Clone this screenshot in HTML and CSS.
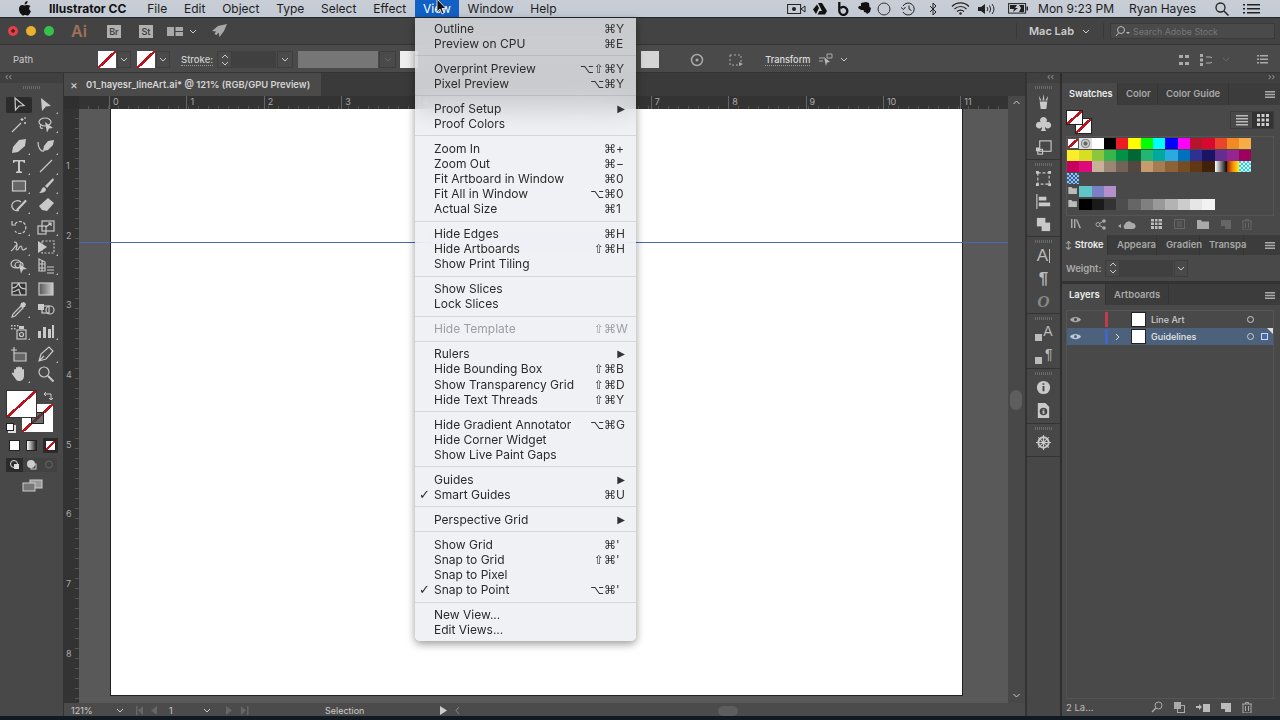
FILE: index.html
```html
<!DOCTYPE html>
<html lang="en">

<head>
  <meta charset="UTF-8">
  <title>Illustrator CC</title>
  <link rel="stylesheet" href="styles.css">
</head>

<body>
  <div class="app">
    <!-- mac menu bar -->
    <header class="menubar">
      <svg class="apple" width="14" height="15" viewBox="0 0 14 15"><path d="M9.6 0c.1 1-.3 1.800-.8 2.400-.6.7-1.400 1.100-2.200 1 -.1-.9.3-1.700.8-2.300C8 .5 8.900.1 9.600 0zM12.600 5c-.9.6-1.400 1.400-1.400 2.400 0 1.200.7 2.100 1.800 2.600-.4 1.200-1 2.300-1.700 3.200-.6.700-1.100 1.300-2 1.300-.8 0-1.100-.5-2.100-.5s-1.300.5-2.100.5c-.9 0-1.500-.7-2.100-1.500C1.700 11.500 1 9.600 1 7.900 1 5.400 2.600 4 4.200 4c.9 0 1.600.6 2.200.6.600 0 1.400-.7 2.500-.7 1.300 0 2.400.4 3.700 1.100z"/></svg>
      <span class="app-name">Illustrator CC</span>
      <span class="mi">File</span><span class="mi">Edit</span><span class="mi">Object</span><span class="mi">Type</span><span class="mi">Select</span><span class="mi">Effect</span><span class="mi mi-on">View</span><span class="mi">Window</span><span class="mi">Help</span>
      <div class="status-icons">
        <svg width="19" height="12" viewBox="0 0 19 12"><rect x=".6" y="1.500" width="13" height="9" fill="none" stroke="#222"/><circle cx="7" cy="6" r="2"/><path d="M14 6l4-3v6z" fill="none" stroke="#222"/></svg>
        <svg class="g7" width="14" height="12" viewBox="0 0 14 12"><path d="M5 0h4l5 8H9zM4 1.500l2 3.500-3 6-3-4.500zM4.500 11.500l2-3.500h7.500l-2 3.500z"/></svg>
        <svg class="g11" width="11" height="14" viewBox="0 0 11 14"><path d="M1.300 0v9a4 4 0 1 0 1-2.700" fill="none" stroke="#111" stroke-width="2.300"/></svg>
        <svg class="g12" width="13" height="13" viewBox="0 0 13 13"><path d="M3 1l5-1 3 1 .5 4 1.500 1-1 4-3 2-1-1.500-2-.5-.5-2H3L0 6l1-2h2z"/></svg>
        <svg class="g-circle" width="14" height="14" viewBox="0 0 14 14"><circle cx="7" cy="7" r="6" fill="none" stroke="#333"/></svg>
        <svg class="g10" width="16" height="14" viewBox="0 0 16 14"><path d="M3 4a6 6 0 1 1 0 6M1 5.500l2.500 2 2-2.500M9 3.500V7l2.500 1.500" fill="none" stroke="#222"/></svg>
        <svg class="g14" width="9" height="14" viewBox="0 0 9 14"><path d="M1 4l6 6-3 3V1l3 3-6 6" fill="none" stroke="#222"/></svg>
        <svg class="g13" width="19" height="13" viewBox="0 0 19 13"><path d="M1 4.500a12 12 0 0 1 17 0M3.500 7a8.500 8.500 0 0 1 12 0M6 9.500a5 5 0 0 1 7 0" fill="none" stroke="#222" stroke-width="1.200"/><circle cx="9.500" cy="11.500" r="1.200"/></svg>
        <svg class="g8" width="19" height="12" viewBox="0 0 19 12"><path d="M0 4h3l4-3v10L3 8H0z"/><path d="M9 4a3 3 0 0 1 0 4M11.500 2.500a6 6 0 0 1 0 7M14 1a8 8 0 0 1 0 10" fill="none" stroke="#222"/></svg>
        <svg class="g11" width="20" height="11" viewBox="0 0 20 11"><rect x=".6" y=".6" width="17" height="9.500" fill="none" stroke="#222"/><path d="M2 2h7l-2 3h3l-5 4 1-3H2zM11 2h5v7h-5l2-4z"/><rect x="18.500" y="3.500" width="1.500" height="4"/></svg>
      </div>
      <span class="clock">Mon 9:23 PM</span>
      <span class="user">Ryan Hayes</span>
      <svg class="g-search" width="14" height="14" viewBox="0 0 14 14"><circle cx="5.500" cy="5.500" r="4.500" fill="none" stroke="#222" stroke-width="1.300"/><path d="M9 9l4.500 4.500" stroke="#222" stroke-width="1.500"/></svg>
      <svg class="g-list" width="17" height="11" viewBox="0 0 17 11"><path d="M0 1h2v1.500H0zM4 1h13v1.500H4zM0 5h2v1.500H0zM4 5h13v1.500H4zM0 9h2v1.500H0zM4 9h13v1.500H4z"/></svg>
    </header>

    <!-- ai title bar -->
    <div class="titlebar">
      <div class="lights">
        <span class="light red"></span><span class="light yellow"></span><span class="light green"></span>
      </div>
      <span class="ai-logo">Ai</span>
      <span class="bridge">Br</span>
      <span class="bridge st">St</span>
      <svg class="layout-ic" width="16" height="11" viewBox="0 0 16 11"><path d="M0 1h7v9H0zM8.500 1H16v4H8.500zM8.500 6H16v4H8.500z" fill="#a9a9a9"/></svg>
      <svg class="chev" width="8" height="5" viewBox="0 0 8 5"><path d="M1 1l3 3 3-3"/></svg>
      <svg class="rocket" width="15" height="14" viewBox="0 0 15 14"><path d="M15 0L6 2 0 7l4 .5L2.500 10l2 1 2-2.500L7.500 13 12 7z" fill="#a9a9a9"/></svg>
      <div class="title-right">
        <span class="v-sep"></span>
        <span class="workspace">Mac Lab</span>
        <svg class="chev chev-wide" width="8" height="5" viewBox="0 0 8 5"><path d="M1 1l3 3 3-3"/></svg>
        <span class="v-sep"></span>
        <div class="stock-search">
          <svg width="15" height="12" viewBox="0 0 15 12"><circle cx="6" cy="5" r="3.500" fill="none" stroke="#bbb"/><path d="M3.500 8L1 11" stroke="#bbb"/><path d="M11 7h4l-2 2z" fill="#bbb"/></svg>
          <span>Search Adobe Stock</span>
        </div>
      </div>
    </div>

    <!-- control bar -->
    <div class="controlbar">
      <span class="ctl-path">Path</span>
      <span class="none ctl-swatch"></span><span class="ctl-drop"><svg class="chev" width="8" height="5" viewBox="0 0 8 5"><path d="M1 1l3 3 3-3"/></svg></span>
      <span class="none ctl-swatch sw2"></span><span class="ctl-drop"><svg class="chev" width="8" height="5" viewBox="0 0 8 5"><path d="M1 1l3 3 3-3"/></svg></span>
      <span class="ctl-stroke">Stroke:</span>
      <span class="spin"><svg width="8" height="14" viewBox="0 0 8 14"><path d="M1 5l3-3 3 3M1 9l3 3 3-3" fill="none" stroke="#ccc"/></svg></span>
      <span class="ctl-field"></span>
      <span class="ctl-drop wide"><svg class="chev" width="8" height="5" viewBox="0 0 8 5"><path d="M1 1l3 3 3-3"/></svg></span>
      <span class="ctl-grey"></span>
      <span class="ctl-drop off"><svg class="chev" width="8" height="5" viewBox="0 0 8 5"><path d="M1 1l3 3 3-3"/></svg></span>
      <span class="ctl-white"></span>
      <span class="ctl-white box2"></span>
      <svg class="ctl-ic globe" width="14" height="14" viewBox="0 0 14 14"><circle cx="7" cy="7" r="5.500" fill="none" stroke="#aaa" stroke-width="1.500"/><circle cx="7" cy="7" r="1.500" fill="#aaa"/></svg>
      <svg class="ctl-ic dash" width="16" height="14" viewBox="0 0 16 14"><rect x="2" y="2" width="11" height="10" fill="none" stroke="#aaa" stroke-dasharray="2 2"/><path d="M11 9l4 2-4 2z" fill="#aaa"/></svg>
      <span class="ctl-transform">Transform</span>
      <svg class="ctl-ic trans" width="15" height="14" viewBox="0 0 15 14"><path d="M1 5h5M1 8h4M9 1h5v4H9z" fill="none" stroke="#aaa"/><path d="M6 4l6 5-3 .5-1 3.500z" fill="#bbb"/></svg>
      <svg class="chev trans-chev" width="8" height="5" viewBox="0 0 8 5"><path d="M1 1l3 3 3-3"/></svg>
      <div class="ctl-right">
        <svg width="12" height="12" viewBox="0 0 12 12"><path d="M1 1h4v3H1zM7 1h4v3H7zM1 8h4v3H1zM7 8h4v3H7z" fill="#aaa"/></svg>
        <svg width="12" height="12" viewBox="0 0 12 12"><path d="M0 0h3v3H0zM0 4.500h3v3H0zM0 9h3v3H0z" fill="#aaa"/><path d="M6 3h4a3 3 0 0 1 0 6H6" fill="none" stroke="#aaa"/></svg>
        <svg class="chev off" width="8" height="5" viewBox="0 0 8 5"><path d="M1 1l3 3 3-3"/></svg>
        <svg class="ctl-list" width="11" height="9" viewBox="0 0 11 9"><path d="M0 0h2v1.500H0zM3 0h8v1.500H3zM0 3.500h2V5H0zM3 3.500h8V5H3zM0 7h2v1.500H0zM3 7h8v1.500H3z" fill="#aaa"/></svg>
      </div>
    </div>

    <div class="workspace-row">
      <!-- tools -->
      <aside class="toolbar">
        <div class="collapse-row">&lsaquo;&lsaquo;</div>
        <div class="grip"></div>
        <div class="tools">
          <span class="tool plain tool-on"><svg viewBox="0 0 18 18"><path d="M5 2l9 7.500-5 .5-3.500 4z"/></svg></span>
          <span class="tool"><svg viewBox="0 0 18 18"><path class="f" d="M4 2l10 8-5 .5-4 4.500z"/></svg></span>
          <span class="tool plain"><svg viewBox="0 0 18 18"><path d="M2 16L11 7M12 2v3M10.500 3.500h3M15 6v2M14 7h2M15 1v2"/></svg></span>
          <span class="tool"><svg viewBox="0 0 18 18"><ellipse cx="8" cy="6" rx="6" ry="4"/><path d="M4 9c-2 2 0 4 2 3"/><path class="f" d="M8 6l8 6-4 .5-2 4z"/></svg></span>

          <span class="tool gap2"><svg viewBox="0 0 18 18"><path class="f" d="M16 2l-7 1-6 7-1 6 6-1 7-6z"/></svg></span>
          <span class="tool gap2"><svg viewBox="0 0 18 18"><path class="f" d="M17 3l-6 1-4 5-1 5 5-1 5-5z"/><path d="M1 5c0 6 3 10 6 9"/></svg></span>
          <span class="tool"><svg viewBox="0 0 18 18"><path class="f" d="M3 3h12v3h-1l-1-1.500h-3V14l2 .7V16H6v-1.300l2-.7V4.500H5L4 6H3z"/></svg></span>
          <span class="tool"><svg viewBox="0 0 18 18"><path d="M3 15L15 3"/></svg></span>
          <span class="tool"><svg viewBox="0 0 18 18"><rect x="2.500" y="4" width="13" height="10" fill="#666"/></svg></span>
          <span class="tool"><svg viewBox="0 0 18 18"><path class="f" d="M16 1L8 9l2 2 7-8zM7 10c-3 1-2 4-5 6 4 0 7-1 7-4z"/></svg></span>
          <span class="tool"><svg viewBox="0 0 18 18"><path d="M11 6a5.500 5 0 1 0-2 8.500M6 15L16 4.500"/><path d="M16 4.500L7 14" stroke-width="2"/></svg></span>
          <span class="tool"><svg viewBox="0 0 18 18"><path class="f" d="M11 2l6 5-7 8-5-1-3-4z"/></svg></span>

          <span class="tool gap2"><svg viewBox="0 0 18 18"><path d="M5 6a6 6 0 1 1 0 7" stroke-dasharray="3 1.500"/><path d="M2 3v4h4"/></svg></span>
          <span class="tool gap2"><svg viewBox="0 0 18 18"><rect x="1" y="8" width="8" height="8"/><rect x="5" y="3" width="12" height="10"/><path d="M9 9l5-4M11 5h3v3"/></svg></span>
          <span class="tool"><svg viewBox="0 0 18 18"><path d="M1 13c3-1 3-5 6-6 0 3-2 5 0 5s2-4 4-4 0 4 2 4 3-2 4-2M4 4c1 0 3 0 3 3"/></svg></span>
          <span class="tool"><svg viewBox="0 0 18 18"><rect x="5" y="3" width="12" height="12" stroke-dasharray="2 1.500"/><path class="f" d="M1 3l9 6-9 6z"/></svg></span>
          <span class="tool"><svg viewBox="0 0 18 18"><ellipse cx="6" cy="7" rx="5" ry="4"/><ellipse cx="9" cy="8" rx="4" ry="3"/><path class="f" d="M9 7l8 5-4 .5-2 4z"/></svg></span>
          <span class="tool"><svg viewBox="0 0 18 18"><path d="M2 2l6 3v9H2zM2 7h6M2 11h6M5 3v11M10 10h7M10 13h7M10 16h7"/></svg></span>

          <span class="tool plain gap3"><svg viewBox="0 0 18 18"><rect x="2" y="3" width="14" height="12" fill="#333"/><path d="M2 8c4 0 5-2 7-5M9 3c0 4 2 6 7 6M2 12c3 0 5-2 7-3M9 9c0 3 1 4 2 6"/></svg></span>
          <span class="tool plain gap3"><svg viewBox="0 0 18 18"><defs><linearGradient id="toolGrad"><stop offset="0" stop-color="#555"/><stop offset="1" stop-color="#ccc"/></linearGradient></defs><rect x="2" y="3" width="14" height="12" fill="url(#toolGrad)"/></svg></span>

          <span class="tool"><svg viewBox="0 0 18 18"><path d="M11 6L3 14l-1 3 3-1 8-8z"/><path class="f" d="M10 5l3 3 1-1 1 0 1-3-2-2-3 1v1z"/></svg></span>
          <span class="tool plain"><svg viewBox="0 0 18 18"><rect class="f" x="1" y="4" width="6" height="6"/><rect x="5" y="6" width="7" height="7"/><circle cx="13" cy="10" r="4"/></svg></span>

          <span class="tool gap3"><svg viewBox="0 0 18 18"><path class="f" d="M1 3h1.500v1.500H1zM4 3h1.500v1.500H4zM7 3h1.500v1.500H7zM1 6h1.500v1.500H1zM4 6h1.500v1.500H4z"/><rect x="7" y="8" width="9" height="9"/><rect class="f" x="9" y="4" width="5" height="3"/><circle cx="11.500" cy="12.500" r="2"/></svg></span>
          <span class="tool gap3"><svg viewBox="0 0 18 18"><path class="f" d="M1 9h3v7H1zM6 5h3v11H6zM11 7h3v9h-3zM15 3h2v13h-2z"/></svg></span>

          <span class="tool plain gap3"><svg viewBox="0 0 18 18"><path d="M1 5h6M4 2v6"/><path d="M4 8h12v8H4z" fill="#666"/></svg></span>
          <span class="tool gap3"><svg viewBox="0 0 18 18"><path d="M2 16l2-7 8-7 4 4-7 8zM2 16l5-5"/></svg></span>
          <span class="tool"><svg viewBox="0 0 18 18"><path class="f" d="M4 10V5a1 1 0 0 1 2 0V3a1 1 0 0 1 2 0v-.5a1 1 0 0 1 2 0V3a1 1 0 0 1 2 0v2a1 1 0 0 1 2 0v6c0 3-2 5-5 5-2 0-3-1-4-3L2 9c-.5-1.500 1-2 2-1z"/></svg></span>
          <span class="tool plain"><svg viewBox="0 0 18 18"><circle cx="7" cy="7" r="5"/><path d="M11 11l5.500 5.500" stroke-width="2"/></svg></span>
        </div>

        <div class="color-wells">
          <span class="none well-stroke"><span class="well-hole"></span></span>
          <span class="none well-fill"></span>
          <svg class="well-swap" width="10" height="10" viewBox="0 0 10 10"><path d="M1 3h6v6M0 3l2-2M0 3l2 2M5 7l2 2 2-2" fill="none" stroke="#ccc"/></svg>
          <span class="well-default"></span>
        </div>
        <div class="modes">
          <span class="mode white"></span>
          <span class="mode gradient"></span>
          <span class="mode-on"><span class="none mode"></span></span>
        </div>
        <div class="draw-modes">
          <span class="dm dm-on"><svg width="12" height="11" viewBox="0 0 12 11"><circle cx="5" cy="5" r="3.500" fill="none" stroke="#ddd"/><rect x="5" y="5" width="5" height="5" fill="#ddd"/></svg></span>
          <span class="dm"><svg width="12" height="11" viewBox="0 0 12 11"><circle cx="5" cy="5" r="4" fill="#ccc"/><rect x="5" y="5" width="5" height="5" fill="none" stroke="#ccc"/></svg></span>
          <span class="dm"><svg width="12" height="11" viewBox="0 0 12 11"><circle cx="6" cy="5.500" r="3.500" fill="none" stroke="#666"/></svg></span>
        </div>
        <svg class="screen-mode" width="21" height="13" viewBox="0 0 21 13"><rect x="8" y="1" width="12" height="8" fill="#999" stroke="#ccc"/><rect x="1" y="4" width="12" height="8" fill="#777" stroke="#ccc"/></svg>
      </aside>

      <!-- document -->
      <main class="doc">
        <div class="tabstrip">
          <div class="doc-tab"><span class="doc-x">&times;</span><span>01_hayesr_lineArt.ai* @ 121% (RGB/GPU Preview)</span></div>
        </div>
        <div class="ruler-h">
          <span class="ruler-corner"></span>
          <div class="ruler-marks">
            <span>0</span><span>1</span><span>2</span><span>3</span><span>4</span><span>5</span><span>6</span><span>7</span><span>8</span><span>9</span><span>10</span><span>11</span>
          </div>
          <span class="scroll-cap"><svg class="chev up" width="9" height="5" viewBox="0 0 8 5"><path d="M1 4l3-3 3 3"/></svg></span>
        </div>
        <div class="doc-body">
          <div class="ruler-v">
            <span>1</span><span>2</span><span>3</span><span>4</span><span>5</span><span>6</span><span>7</span><span>8</span>
          </div>
          <div class="canvas">
            <div class="artboard"></div>
            <div class="guide"></div>
          </div>
          <div class="vscroll">
            <span class="vthumb"></span>
            <svg class="chev" width="9" height="5" viewBox="0 0 8 5"><path d="M1 1l3 3 3-3"/></svg>
          </div>
        </div>
        <div class="statusbar">
          <span class="st-zoom">121%</span>
          <svg class="chev st-drop" width="8" height="5" viewBox="0 0 8 5"><path d="M1 1l3 3 3-3"/></svg>
          <svg class="st-nav" width="24" height="9" viewBox="0 0 24 9"><path d="M0 0h1.500v9H0zM7 0v9L2 4.500zM21 0v9l-6-4.500z" fill="#666"/></svg>
          <span class="st-page">1</span>
          <svg class="chev st-drop2" width="8" height="5" viewBox="0 0 8 5"><path d="M1 1l3 3 3-3"/></svg>
          <svg class="st-nav st-nav2" width="24" height="9" viewBox="0 0 24 9"><path d="M0 0v9l6-4.500zM15 0v9l5-4.500zM21 0h1.500v9H21z" fill="#666"/></svg>
          <span class="st-tool">Selection</span>
          <svg class="st-play" width="7" height="9" viewBox="0 0 7 9"><path d="M0 0l7 4.500L0 9z" fill="#ccc"/></svg>
          <svg class="st-left" width="5" height="9" viewBox="0 0 5 9"><path d="M4 1L1 4.500 4 8" fill="none" stroke="#888"/></svg>
          <span class="hthumb"></span>
        </div>
      </main>

      <!-- dock column -->
      <aside class="dock">
        <div class="collapse-row right">&lsaquo;&lsaquo;</div>
        <div class="dock-group">
          <div class="grip"></div>
          <svg viewBox="0 0 18 18"><path class="f" d="M5 9h8l-1 8H6zM4 3l3 5H5zM14 3l-3 5h2zM9 1l1 7H8z"/></svg>
          <svg viewBox="0 0 18 18"><path class="f" d="M9 1a3.500 3.500 0 0 1 3 5.500 3.500 3.500 0 1 1-1.500 5c0 2 .5 3.500 1.500 4.500H6c1-1 1.500-2.500 1.500-4.500a3.500 3.500 0 1 1-1.500-5A3.500 3.500 0 0 1 9 1z"/></svg>
          <svg viewBox="0 0 18 18"><rect x="5" y="2" width="12" height="11"/><rect class="f" x="1" y="9" width="4" height="4"/><rect x="3" y="11" width="5" height="5"/></svg>
        </div>
        <div class="dock-group">
          <div class="grip"></div>
          <svg viewBox="0 0 18 18"><rect x="3" y="3" width="12" height="12" stroke-dasharray="3 2"/><path class="f" d="M1 1h3v3H1zM14 1h3v3h-3zM1 14h3v3H1zM14 14h3v3h-3z"/></svg>
          <svg viewBox="0 0 18 18"><path d="M2 1v16"/><path class="f" d="M4 4h8v4H4zM4 10h12v4H4z"/></svg>
          <svg viewBox="0 0 18 18"><rect class="f" x="2" y="2" width="9" height="9"/><rect class="f" x="7" y="7" width="9" height="9"/></svg>
        </div>
        <div class="dock-group">
          <div class="grip"></div>
          <span class="dock-text">A<i></i></span>
          <span class="dock-text para">&para;</span>
          <span class="dock-text opentype">O</span>
        </div>
        <div class="dock-group">
          <div class="grip"></div>
          <span class="dock-style"><b>A</b></span>
          <span class="dock-style"><b>&para;</b></span>
        </div>
        <div class="dock-group">
          <div class="grip"></div>
          <svg viewBox="0 0 18 18"><circle class="f" cx="9" cy="9" r="7"/><path d="M9 7.500V13M9 4.500v1.500" class="dk"/></svg>
          <svg viewBox="0 0 18 18"><path class="f" d="M3 1h8l4 4v12H3z"/><circle cx="9" cy="10" r="4" class="dk2"/><path d="M9 9v3.500M9 7.500v.5" class="lt"/></svg>
        </div>
        <div class="dock-group last">
          <div class="grip"></div>
          <svg viewBox="0 0 18 18"><circle cx="9" cy="9" r="5.500" stroke-width="2"/><circle class="f" cx="9" cy="9" r="1.800"/><path d="M9 1v16M1 9h16M3.500 3.500l11 11M14.500 3.500l-11 11"/></svg>
        </div>
      </aside>

      <!-- panels -->
      <section class="panels">
        <div class="collapse-row right end">&rsaquo;&rsaquo;</div>

        <div class="tabs">
          <span class="tab tab-on t-swatches">Swatches</span><span class="tab t-color">Color</span><span class="tab">Color Guide</span>
          <svg class="burger" width="10" height="7" viewBox="0 0 10 7"><path d="M0 0h10v1.500H0zM0 2.800h10v1.500H0zM0 5.500h10V7H0z"/></svg>
        </div>
        <div class="swatches-panel">
          <div class="sw-head">
            <div class="sw-wells">
              <span class="none sw-well back"></span>
              <span class="none sw-well"></span>
            </div>
            <div class="view-toggle">
              <span class="view"><svg width="12" height="12" viewBox="0 0 12 12"><path d="M0 1h12v1.500H0zM0 4h12v1.500H0zM0 7h12v1.500H0zM0 10h12v1.500H0z" fill="#bbb"/></svg></span>
              <span class="view view-on"><svg width="12" height="12" viewBox="0 0 12 12"><path d="M0 0h3v3H0zM4.500 0h3v3h-3zM9 0h3v3H9zM0 4.500h3v3H0zM4.500 4.500h3v3h-3zM9 4.500h3v3H9zM0 9h3v3H0zM4.500 9h3v3h-3zM9 9h3v3H9z" fill="#ccc"/></svg></span>
            </div>
          </div>
          <div class="well-frame">
            <div class="sw-row">
              <i class="none sw-none"></i><i class="sw-reg"></i><i style="background:#fff"></i><i style="background:#000"></i><i style="background:#ed1c24"></i><i style="background:#ff0"></i><i style="background:#0f0"></i><i style="background:#0ff"></i><i style="background:#00f"></i><i style="background:#f0f"></i><i style="background:#b5152b"></i><i style="background:#d8082f"></i><i style="background:#e8452a"></i><i style="background:#f18a23"></i><i style="background:#f6ad47"></i>
            </div>
            <div class="sw-row">
              <i style="background:#fbed2a"></i><i style="background:#d7df23"></i><i style="background:#8cc63f"></i><i style="background:#39b54a"></i><i style="background:#009245"></i><i style="background:#006837"></i><i style="background:#22b573"></i><i style="background:#00a99d"></i><i style="background:#29abe2"></i><i style="background:#0071bc"></i><i style="background:#2e3192"></i><i style="background:#1b1464"></i><i style="background:#662d91"></i><i style="background:#93278f"></i><i style="background:#9e005d"></i>
            </div>
            <div class="sw-row">
              <i style="background:#c6005d"></i><i style="background:#dd0a7c"></i><i style="background:#c7b299"></i><i style="background:#998675"></i><i style="background:#736357"></i><i style="background:#534741"></i><i style="background:#c69c6d"></i><i style="background:#a67c52"></i><i style="background:#8c6239"></i><i style="background:#754c24"></i><i style="background:#603813"></i><i style="background:#42210b"></i><i class="sw-bw"></i><i class="sw-orange"></i><i class="sw-check"></i>
            </div>
            <div class="sw-row">
              <i class="sw-pattern"></i>
            </div>
            <div class="sw-row sw-group">
              <svg class="folder" width="11" height="9" viewBox="0 0 11 9"><path d="M0 0h4l1 1.500h6V9H0z" fill="#bbb"/></svg><i style="background:#5fc6c8"></i><i style="background:#7a7fc6"></i><i style="background:#b58fcb"></i>
            </div>
            <div class="sw-row sw-group">
              <svg class="folder" width="11" height="9" viewBox="0 0 11 9"><path d="M0 0h4l1 1.500h6V9H0z" fill="#bbb"/></svg><i style="background:#000"></i><i style="background:#1a1a1a"></i><i style="background:#333"></i><i style="background:#4d4d4d"></i><i style="background:#666"></i><i style="background:#808080"></i><i style="background:#999"></i><i style="background:#b3b3b3"></i><i style="background:#ccc"></i><i style="background:#e6e6e6"></i><i style="background:#f2f2f2"></i>
            </div>
          </div>
          <div class="sw-foot">
            <svg width="14" height="11" viewBox="0 0 14 11"><path d="M1 0h1.500v9H1zM4 0h1.500v9H4zM7 0l4 9-1.500.5L6 1z" fill="#aaa"/></svg>
            <svg width="12" height="11" viewBox="0 0 12 11"><circle cx="3" cy="5.500" r="2" fill="none" stroke="#aaa"/><circle cx="9" cy="2" r="1.800" fill="#aaa"/><circle cx="9" cy="9" r="1.800" fill="#aaa"/><path d="M4.500 4.500L8 2.500M4.500 6.500L8 8.500" stroke="#aaa"/></svg>
            <svg width="18" height="11" viewBox="0 0 18 11"><path d="M7 10a3 3 0 0 1 0-5 4 4 0 0 1 7-1 3 3 0 0 1 1 6zM0 7l3-2v4z" fill="#aaa"/></svg>
            <svg class="foot-grid" width="12" height="11" viewBox="0 0 12 11"><rect width="11" height="10" fill="#bbb"/><path d="M0 3h11M0 6.500h11M3.500 0v10M7 0v10" stroke="#444"/></svg>
            <svg class="foot-dim" width="12" height="10" viewBox="0 0 12 10"><rect x=".5" y=".5" width="10" height="9" fill="none" stroke="#666"/><path d="M3 3h5M3 5h5M3 7h5" stroke="#666"/></svg>
            <svg width="13" height="9" viewBox="0 0 13 9"><path d="M0 0h4l1 1.500h7V9H0z" fill="#aaa"/></svg>
            <svg class="foot-dim" width="10" height="9" viewBox="0 0 10 9"><path d="M0 0h10v9H4V6H0z" fill="#666"/></svg>
            <svg class="foot-dim" width="10" height="11" viewBox="0 0 10 11"><path d="M0 2h10M3.500 2V.5h3V2M1 2v9h8V2M3.500 4v5M6.500 4v5" fill="none" stroke="#666"/></svg>
          </div>
        </div>

        <div class="tabs tabs-small">
          <span class="tab tab-on stroke-tab"><em>&#8597;</em>Stroke</span><span class="tab t-app">Appeara</span><span class="tab t-grad">Gradien</span><span class="tab t-trans">Transpa</span>
          <svg class="burger" width="10" height="7" viewBox="0 0 10 7"><path d="M0 0h10v1.500H0zM0 2.800h10v1.500H0zM0 5.500h10V7H0z"/></svg>
        </div>
        <div class="stroke-panel">
          <span class="weight">Weight:</span>
          <span class="spin"><svg width="8" height="14" viewBox="0 0 8 14"><path d="M1 5l3-3 3 3M1 9l3 3 3-3" fill="none" stroke="#ccc"/></svg></span>
          <span class="ctl-field stroke-field"></span>
          <span class="ctl-drop"><svg class="chev" width="8" height="5" viewBox="0 0 8 5"><path d="M1 1l3 3 3-3"/></svg></span>
        </div>

        <div class="tabs layer-tabs">
          <span class="tab tab-on t-layers">Layers</span><span class="tab">Artboards</span>
          <svg class="burger" width="10" height="7" viewBox="0 0 10 7"><path d="M0 0h10v1.500H0zM0 2.800h10v1.500H0zM0 5.500h10V7H0z"/></svg>
        </div>
        <div class="layers-panel">
          <div class="layer-list">
            <div class="layer">
              <svg class="eye" width="11" height="7" viewBox="0 0 11 7"><path d="M0 3.500C2 0 9 0 11 3.500 9 7 2 7 0 3.500z" fill="#aaa"/><circle cx="5.500" cy="3.500" r="1.500" fill="#444"/></svg>
              <span class="layer-color redbar"></span>
              <span class="layer-arrow"></span>
              <span class="layer-thumb"></span>
              <span class="layer-name">Line Art</span>
              <span class="layer-dot"></span>
              <span class="layer-sel"></span>
            </div>
            <div class="layer layer-on">
              <svg class="eye" width="11" height="7" viewBox="0 0 11 7"><path d="M0 3.500C2 0 9 0 11 3.500 9 7 2 7 0 3.500z" fill="#bcc8d6"/><circle cx="5.500" cy="3.500" r="1.500" fill="#4c627c"/></svg>
              <span class="layer-color bluebar"></span>
              <span class="layer-arrow"><svg width="5" height="8" viewBox="0 0 5 8"><path d="M1 1l3 3-3 3" fill="none" stroke="#ddd"/></svg></span>
              <span class="layer-thumb"></span>
              <span class="layer-name">Guidelines</span>
              <span class="layer-dot"></span>
              <span class="layer-sel on"></span>
              <span class="layer-corner"></span>
            </div>
          </div>
        </div>
        <div class="layers-foot">
          <span class="layer-count">2 La...</span>
          <svg width="12" height="12" viewBox="0 0 12 12"><circle cx="7.500" cy="4.500" r="3.500" fill="none" stroke="#aaa"/><path d="M5 7l-4 4" stroke="#aaa" stroke-width="1.500"/></svg>
          <svg width="11" height="11" viewBox="0 0 11 11"><rect width="7" height="7" fill="#aaa"/><rect x="3.500" y="3.500" width="7" height="7" fill="none" stroke="#aaa"/></svg>
          <svg width="14" height="9" viewBox="0 0 14 9"><path d="M0 3h3V1l3 3-3 3V5H0zM7 1h7v8H7z" fill="#bbb"/></svg>
          <svg width="10" height="9" viewBox="0 0 10 9"><path d="M0 0h10v9H4V6H0z" fill="#bbb"/></svg>
          <svg width="10" height="11" viewBox="0 0 10 11"><path d="M0 2h10M3.500 2V.5h3V2M1 2v9h8V2M3.500 4v5M6.500 4v5" fill="none" stroke="#aaa"/></svg>
        </div>
      </section>
    </div>
    <div class="desktop-strip"></div>
  </div>

  <!-- open View menu -->
  <nav class="view-menu">
    <div class="item"><b></b><span>Outline</span><kbd>&#8984;<u>Y</u></kbd></div>
    <div class="item"><b></b><span>Preview on CPU</span><kbd>&#8984;<u>E</u></kbd></div>
    <hr>
    <div class="item"><b></b><span>Overprint Preview</span><kbd>&#8997;&#8679;&#8984;<u>Y</u></kbd></div>
    <div class="item"><b></b><span>Pixel Preview</span><kbd>&#8997;&#8984;<u>Y</u></kbd></div>
    <hr>
    <div class="item"><b></b><span>Proof Setup</span><kbd class="sub">&#9654;</kbd></div>
    <div class="item"><b></b><span>Proof Colors</span></div>
    <hr>
    <div class="item"><b></b><span>Zoom In</span><kbd>&#8984;<u>+</u></kbd></div>
    <div class="item"><b></b><span>Zoom Out</span><kbd>&#8984;<u>&minus;</u></kbd></div>
    <div class="item"><b></b><span>Fit Artboard in Window</span><kbd>&#8984;<u>0</u></kbd></div>
    <div class="item"><b></b><span>Fit All in Window</span><kbd>&#8997;&#8984;<u>0</u></kbd></div>
    <div class="item"><b></b><span>Actual Size</span><kbd>&#8984;<u>1</u></kbd></div>
    <hr>
    <div class="item"><b></b><span>Hide Edges</span><kbd>&#8984;<u>H</u></kbd></div>
    <div class="item"><b></b><span>Hide Artboards</span><kbd>&#8679;&#8984;<u>H</u></kbd></div>
    <div class="item"><b></b><span>Show Print Tiling</span></div>
    <hr>
    <div class="item"><b></b><span>Show Slices</span></div>
    <div class="item"><b></b><span>Lock Slices</span></div>
    <hr>
    <div class="item disabled"><b></b><span>Hide Template</span><kbd>&#8679;&#8984;<u>W</u></kbd></div>
    <hr>
    <div class="item"><b></b><span>Rulers</span><kbd class="sub">&#9654;</kbd></div>
    <div class="item"><b></b><span>Hide Bounding Box</span><kbd>&#8679;&#8984;<u>B</u></kbd></div>
    <div class="item"><b></b><span>Show Transparency Grid</span><kbd>&#8679;&#8984;<u>D</u></kbd></div>
    <div class="item"><b></b><span>Hide Text Threads</span><kbd>&#8679;&#8984;<u>Y</u></kbd></div>
    <hr>
    <div class="item"><b></b><span>Hide Gradient Annotator</span><kbd>&#8997;&#8984;<u>G</u></kbd></div>
    <div class="item"><b></b><span>Hide Corner Widget</span></div>
    <div class="item"><b></b><span>Show Live Paint Gaps</span></div>
    <hr>
    <div class="item"><b></b><span>Guides</span><kbd class="sub">&#9654;</kbd></div>
    <div class="item"><b>&#10003;</b><span>Smart Guides</span><kbd>&#8984;<u>U</u></kbd></div>
    <hr>
    <div class="item"><b></b><span>Perspective Grid</span><kbd class="sub">&#9654;</kbd></div>
    <hr>
    <div class="item"><b></b><span>Show Grid</span><kbd>&#8984;<u>'</u></kbd></div>
    <div class="item"><b></b><span>Snap to Grid</span><kbd>&#8679;&#8984;<u>'</u></kbd></div>
    <div class="item"><b></b><span>Snap to Pixel</span></div>
    <div class="item"><b>&#10003;</b><span>Snap to Point</span><kbd>&#8997;&#8984;<u>'</u></kbd></div>
    <hr>
    <div class="item"><b></b><span>New View...</span></div>
    <div class="item"><b></b><span>Edit Views...</span></div>
  </nav>

  <svg class="cursor" width="11" height="16" viewBox="0 0 11 16"><path d="M1 0v13l3-3 2 5 2-1-2-4.500h4z" fill="#111" stroke="#fff" stroke-width=".8"/></svg>
</body>

</html>
```

FILE: styles.css
```css
* {
  margin: 0;
  padding: 0;
  box-sizing: border-box;
}

body {
  width: 1280px;
  height: 720px;
  overflow: hidden;
  position: relative;
  background: #101a20;
  font-family: 'Inter', 'Liberation Sans', sans-serif;
  color: #ccc;
}

svg {
  display: block;
  flex: none;
}

.app {
  display: flex;
  flex-direction: column;
  height: 720px;
}

/* mac menu bar */
.menubar {
  height: 18px;
  flex: none;
  display: flex;
  align-items: center;
  background: linear-gradient(#c9ced6, #c3cad4);
  border-bottom: 1px solid #22262b;
  font-size: 12px;
  color: #1d1d1d;
}

.apple {
  margin-left: 18px;
  fill: #111;
}

.app-name {
  margin-left: 17px;
  margin-right: 12.600px;
  font-weight: 700;
  color: #111;
}

.mi {
  padding: 0 8.400px;
  height: 17px;
  line-height: 17px;
}

.mi-on {
  background: #1160c4;
  color: #fff;
}

.status-icons {
  margin-left: auto;
  display: flex;
  align-items: center;
  gap: 7px;
}

.status-icons svg:first-child {
  fill: #222;
}

.g7 { fill: #111; }
.g11 { margin-left: 4px; fill: #222; }
.g12 { margin-left: 2px; fill: #111; }
.g-circle { margin-left: -1px; }
.g8 { margin-left: 1px; fill: #222; }
.g10 { margin-left: 2px; }
.g14 { margin-left: 6px; }
.g13 { margin-left: 6px; fill: #222; }

.clock {
  margin-left: 10px;
}

.user {
  margin-left: 15px;
}

.g-search {
  margin-left: 19px;
}

.g-list {
  margin-left: 14px;
  margin-right: 20px;
  fill: #222;
}

/* title bar */
.titlebar {
  height: 27px;
  flex: none;
  display: flex;
  align-items: center;
  background: #434343;
  border-bottom: 1px solid #343434;
}

.lights {
  display: flex;
  gap: 8px;
  margin-left: 8px;
}

.light {
  width: 10px;
  height: 10px;
  border-radius: 50%;
}

.red {
  background: radial-gradient(circle, #5a1a1a 20%, #e0404a 30%);
}

.yellow { background: #eab02f; }
.green { background: #35c24b; }

.ai-logo {
  margin-left: 17px;
  font-size: 16px;
  font-weight: 600;
  color: #a0705a;
}

.bridge {
  margin-left: 20px;
  width: 14px;
  height: 13px;
  background: #b0b0b0;
  color: #444;
  font-size: 9px;
  font-weight: 600;
  text-align: center;
  line-height: 13px;
}

.st {
  margin-left: 18px;
}

.layout-ic {
  margin-left: 14px;
}

.chev {
  fill: none;
  stroke: #ccc;
}

.titlebar > .chev {
  margin-left: 6px;
}

.rocket {
  margin-left: 15px;
}

.title-right {
  margin-left: auto;
  display: flex;
  align-items: center;
  margin-right: 5px;
}

.v-sep {
  width: 1px;
  height: 16px;
  background: #383838;
}

.workspace {
  margin-left: 12px;
  font-size: 11px;
  font-weight: 600;
  color: #ccc;
}

.chev-wide {
  margin: 0 13px 0 8px;
}

.stock-search {
  margin-left: 6px;
  width: 165px;
  height: 16px;
  background: #4a4a4a;
  border: 1px solid #3a3a3a;
  display: flex;
  align-items: center;
  gap: 3px;
  padding-left: 4px;
  font-size: 8.800px;
  color: #777;
}

/* control bar */
.controlbar {
  height: 28px;
  flex: none;
  display: flex;
  align-items: center;
  padding-top: 2px;
  background: #4a4a4a;
  border-bottom: 1px solid #343434;
  font-size: 9.500px;
}

.ctl-path {
  margin-left: 13px;
  color: #ccc;
  width: 85px;
}

.ctl-swatch {
  width: 18px;
  height: 17px;
}

.sw2 {
  margin-left: 6px;
}

.none {
  display: inline-block;
  background: linear-gradient(to bottom right, #fff calc(50% - 1.300px), #b8151f calc(50% - 1.300px), #b8151f calc(50% + 1.300px), #fff calc(50% + 1.300px));
}

.ctl-drop {
  width: 14px;
  height: 17px;
  margin-left: 1px;
  display: flex;
  align-items: center;
  justify-content: center;
  border: 1px solid #3e3e3e;
}

.ctl-drop.wide {
  width: 16px;
}

.ctl-drop.off .chev,
.chev.off {
  stroke: #666;
}

.ctl-stroke {
  margin-left: 11px;
  color: #ccc;
  font-weight: 500;
  border-bottom: 1px dotted #999;
  line-height: 11px;
}

.spin {
  margin-left: 4px;
  width: 15px;
  height: 17px;
  display: flex;
  align-items: center;
  justify-content: center;
  border: 1px solid #3e3e3e;
}

.ctl-field {
  width: 44px;
  height: 17px;
  background: #404040;
}

.ctl-grey {
  width: 80px;
  height: 17px;
  margin-left: 5px;
  background: #767676;
}

.ctl-drop.off {
  width: 17px;
}

.ctl-white {
  width: 18px;
  height: 17px;
  margin-left: 4px;
  background: #eee;
}

.box2 {
  margin-left: 223px;
  background: #d5d5d5;
}

.ctl-ic.globe { margin-left: 31px; }
.ctl-ic.dash { margin-left: 24px; }

.ctl-transform {
  margin-left: 21px;
  font-size: 9.200px;
  color: #ddd;
  font-weight: 500;
  border-bottom: 1px dotted #999;
  line-height: 11px;
}

.ctl-ic.trans {
  margin-left: 8px;
}

.trans-chev {
  margin-left: 7px;
}

.ctl-right {
  margin-left: auto;
  margin-right: 12px;
  display: flex;
  align-items: center;
  gap: 10px;
}

.ctl-list {
  margin-left: 17px;
}

/* workspace */
.workspace-row {
  flex: 1;
  display: flex;
  min-height: 0;
  background: #2e2e2e;
}

.collapse-row {
  height: 10px;
  line-height: 8px;
  font-size: 9px;
  color: #999;
  padding-left: 5px;
  background: #404040;
}

.collapse-row.right {
  text-align: right;
  padding: 0 6px 0 0;
}

.collapse-row.end {
  padding-right: 5px;
}

.grip {
  height: 3px;
  width: 18px;
  margin: 3px auto 0;
  background: repeating-linear-gradient(90deg, #6a6a6a 0 1px, transparent 1px 2px);
}

/* tools */
.toolbar {
  width: 64px;
  flex: none;
  background: #484848;
  border-right: 1px solid #333;
}

.tools {
  display: grid;
  grid-template-columns: 26px 28px;
  margin: 6px 0 0 6px;
}

.tool {
  height: 19.700px;
  display: flex;
  align-items: center;
  justify-content: center;
  position: relative;
}

.tool:not(.plain)::after {
  content: '';
  position: absolute;
  right: 2px;
  bottom: 1px;
  border: 1.500px solid transparent;
  border-right-color: #bbb;
  border-bottom-color: #bbb;
}

.tool svg,
.dock svg {
  width: 17px;
  height: 17px;
  fill: none;
  stroke: #c9c9c9;
  stroke-width: 1.200;
}

.tool svg {
  width: 18px;
  height: 18px;
}

.tool .f,
.dock .f {
  fill: #c9c9c9;
  stroke: none;
}

.tool-on {
  background: #2b2b2b padding-box;
  border-top: 2px solid transparent;
  border-bottom: 2px solid transparent;
  border-radius: 3px;
}

.gap2 { margin-top: 2px; }
.gap3 { margin-top: 3px; }

.color-wells {
  position: relative;
  height: 46px;
  margin: 6px 0 0 6px;
}

.well-fill,
.well-stroke {
  position: absolute;
}

.well-fill {
  left: 0;
  top: 0;
  width: 31px;
  height: 28px;
  border: 1px solid #333;
}

.well-stroke {
  left: 16px;
  top: 14px;
  width: 31px;
  height: 28px;
}

.well-hole {
  position: absolute;
  left: 9px;
  top: 8px;
  width: 13px;
  height: 12px;
  background: rgba(60, 60, 60, .75);
  border: 1px solid #222;
}

.well-swap {
  position: absolute;
  left: 38px;
  top: 1px;
}

.well-default {
  position: absolute;
  left: 0;
  top: 33px;
  width: 8px;
  height: 8px;
  background: #fff;
  border: 1px solid #222;
  box-shadow: 2px 2px 0 #ddd;
}

.modes {
  display: flex;
  align-items: center;
  gap: 6px;
  margin: 2px 0 0 9px;
}

.mode {
  width: 11px;
  height: 11px;
  border: 1px solid #222;
}

.white { background: #fff; }
.gradient { background: linear-gradient(90deg, #fff, #222); }

.mode-on {
  width: 15px;
  height: 15px;
  background: #2b2b2b;
  display: flex;
  align-items: center;
  justify-content: center;
}

.draw-modes {
  display: flex;
  margin: 5px 0 0 6px;
}

.dm {
  width: 17px;
  height: 14px;
  display: flex;
  align-items: center;
  justify-content: center;
  background: #424242;
}

.dm-on {
  background: #2b2b2b;
}

.screen-mode {
  margin: 7px 0 0 22px;
}

/* document */
.doc {
  width: 961px;
  flex: none;
  display: flex;
  flex-direction: column;
}

.tabstrip {
  height: 23px;
  flex: none;
  background: #3a3a3a;
}

.doc-tab {
  width: 257px;
  height: 23px;
  display: flex;
  align-items: center;
  gap: 8px;
  padding-left: 6px;
  background: #4a4a4a;
  font-size: 9.400px;
  font-weight: 600;
  color: #d5d5d5;
}

.doc-x {
  font-size: 12px;
  font-weight: 400;
}

.ruler-h {
  height: 13px;
  flex: none;
  display: flex;
  background: #333;
  font-size: 9px;
  color: #aaa;
}

.ruler-corner {
  width: 15px;
  flex: none;
  background: #2f2f2f;
}

.ruler-marks {
  width: 929px;
  flex: none;
  display: flex;
  padding-left: 30px;
  overflow: hidden;
  background-image: repeating-linear-gradient(90deg, transparent 0 9px, #555 9px 10px);
  background-size: 100% 3px;
  background-position: 0 100%;
  background-repeat: no-repeat;
}

.ruler-marks span {
  width: 77.400px;
  flex: none;
  padding-left: 3px;
  line-height: 11px;
  border-left: 1px solid #666;
}

.scroll-cap {
  flex: 1;
  display: flex;
  align-items: center;
  justify-content: center;
  background: #484848;
}

.doc-body {
  flex: 1;
  display: flex;
  min-height: 0;
}

.ruler-v {
  width: 15px;
  flex: none;
  background: #333;
  font-size: 9px;
  color: #aaa;
  padding: 51px 0 0 2px;
  background-image: repeating-linear-gradient(transparent 0 9px, #555 9px 10px);
  background-size: 4px 100%;
  background-position: 100% 0;
  background-repeat: no-repeat;
}

.ruler-v span {
  display: block;
  height: 69.700px;
  line-height: 11px;
}

.canvas {
  width: 929px;
  flex: none;
  background: #595959;
  padding: 0 45px 7px 31px;
  position: relative;
}

.artboard {
  height: 100%;
  background: #fff;
  border: 1px solid #222;
  border-top: 0;
}

.guide {
  position: absolute;
  left: 0;
  right: 0;
  top: 133px;
  height: 1px;
  background: #4668b8;
}

.vscroll {
  flex: 1;
  background: #484848;
  position: relative;
  display: flex;
  flex-direction: column;
  align-items: center;
  justify-content: flex-end;
  padding-bottom: 5px;
}

.vthumb {
  position: absolute;
  left: 2px;
  top: 281px;
  width: 12px;
  height: 20px;
  border-radius: 6px;
  background: #5e5e5e;
}

.statusbar {
  height: 13px;
  flex: none;
  display: flex;
  align-items: center;
  padding-top: 2px;
  background: #4b4b4b;
  font-size: 9px;
  color: #ccc;
  position: relative;
}

.st-zoom { margin-left: 7px; width: 45px; }
.st-drop { margin-right: 12px; }
.st-nav { margin-right: 9px; }
.st-page { width: 34px; }
.st-drop2 { margin-right: 15px; }
.st-nav2 { margin-right: 0; }

.st-tool {
  margin-left: 75px;
}

.st-play {
  margin-left: 76px;
}

.st-left {
  margin-left: 8px;
}

.hthumb {
  margin-left: 258px;
  width: 20px;
  height: 10px;
  border-radius: 5px;
  background: #5e5e5e;
}

/* dock */
.dock {
  width: 35px;
  flex: none;
  background: #474747;
  border-left: 2px solid #333;
}

.dock-group {
  border-bottom: 1px solid #333;
  height: 77px;
  display: flex;
  flex-direction: column;
  align-items: center;
  gap: 6px;
}

.dock-group .grip {
  margin: 3px 0 -2px;
}

.dock-group:nth-child(5) { height: 55px; }
.dock-group:nth-child(6) { height: 55px; }
.dock-group.last { height: 33px; }

.dock-text {
  height: 17px;
  font: 17px/17px 'Liberation Sans', sans-serif;
  color: #bbb;
  display: flex;
  align-items: center;
}

.dock-text i {
  width: 1px;
  height: 14px;
  background: #bbb;
  margin-left: 1px;
}

.para {
  font-weight: 700;
}

.opentype {
  font: italic 700 17px/17px 'Liberation Serif', serif;
  color: #888;
}

.dock-style {
  width: 18px;
  height: 17px;
  font: 14px/15px 'Liberation Sans', sans-serif;
  color: #bbb;
  text-align: right;
  background: linear-gradient(#bbb, #bbb) 0 100% / 7px 7px no-repeat;
}

.dock-style b {
  font-weight: 400;
}

.dk, .lt {
  stroke: #474747;
  stroke-width: 2;
}

.dk2 {
  fill: #474747;
  stroke: none;
}

.lt {
  stroke: #c9c9c9;
}

/* panels */
.panels {
  flex: 1;
  min-width: 0;
  display: flex;
  flex-direction: column;
  background: #333;
  margin-left: 2px;
}

.tabs {
  height: 22px;
  flex: none;
  display: flex;
  align-items: stretch;
  background: #3c3c3c;
  font-size: 9.500px;
  font-weight: 600;
  position: relative;
  color: #a8a8a8;
}

.tab {
  padding: 0 8px;
  line-height: 22px;
  border-right: 1px solid #343434;
  white-space: nowrap;
}

.tab-on {
  background: #494949;
  color: #eee;
  font-size: 9.200px;
  padding: 0 7px;
}

.t-swatches { width: 56px; }
.t-color { width: 40px; }
.t-layers { width: 44px; }

.burger {
  position: absolute;
  right: 5px;
  top: 8px;
  fill: #aaa;
}

.swatches-panel {
  height: 130px;
  flex: none;
  background: #494949;
  padding: 5px 6px 0 4px;
}

.sw-head {
  display: flex;
  justify-content: space-between;
  height: 26px;
}

.sw-wells {
  position: relative;
  width: 27px;
}

.sw-well {
  position: absolute;
  left: 0;
  top: 0;
  width: 17px;
  height: 15px;
  border: 1px solid #222;
}

.sw-well.back {
  left: 9px;
  top: 8px;
  width: 17px;
  height: 16px;
}

.view-toggle {
  display: flex;
  height: 18px;
  margin-top: 1px;
  border: 1px solid #3c3c3c;
}

.view {
  width: 21px;
  display: flex;
  align-items: center;
  justify-content: center;
}

.view-on {
  background: #333;
}

.well-frame {
  height: 80px;
  padding-top: 1px;
  border: 1px solid #555;
  display: flex;
  flex-direction: column;
}

.sw-row {
  display: flex;
  height: 11.500px;
}

.sw-row i {
  width: 12.300px;
  height: 11px;
  flex: none;
  display: block;
}

.sw-none { border: 1px solid #555; }

.sw-reg {
  background: #ddd radial-gradient(circle, #666 20%, #ddd 30%, #888 50%, #ddd 60%);
}

.sw-bw { background: linear-gradient(90deg, #fff, #000); }
.sw-orange { background: linear-gradient(90deg, #a01f00, #f39200, #fcee21); }

.sw-check {
  background: repeating-conic-gradient(#cfeef0 0 25%, #35d0da 0 50%) 0 0 / 4px 4px;
}

.sw-pattern {
  background: repeating-conic-gradient(#2f5f9f 0 25%, #9cc0e0 0 50%) 0 0 / 4px 4px;
}

.sw-group {
  margin-top: 1.500px;
  height: 11.500px;
}

.folder {
  width: 12.300px;
  padding: 1px 1px 1px 0;
}

.sw-foot {
  display: flex;
  align-items: center;
  height: 16px;
  padding-left: 4px;
  gap: 11px;
}

.foot-grid {
  margin-left: 4px;
}

.tabs-small {
  height: 20px;
}

.tabs-small .tab {
  line-height: 20px;
  padding: 0 0 0 9px;
}

.tabs-small .burger {
  top: 7px;
}

.tabs-small .stroke-tab {
  width: 46px;
  padding-left: 3px;
}

.stroke-tab em {
  font-style: normal;
  font-size: 8px;
  color: #aaa;
  margin-right: 3px;
}

.t-app { width: 49px; }
.t-grad { width: 43px; }
.t-trans { width: 44px; }

.stroke-panel {
  height: 26px;
  flex: none;
  display: flex;
  align-items: center;
  background: #494949;
  margin-bottom: 3px;
  padding-left: 4px;
  font-size: 9.500px;
  font-weight: 600;
  color: #aaa;
}

.weight {
  width: 35px;
}

.spin + .stroke-field {
  width: 53px;
  margin-left: 0;
}

.layer-tabs {
  height: 21px;
}

.layer-tabs .tab {
  line-height: 21px;
}

.layer-tabs .tab-on {
  font-size: 9.500px;
}

.layers-panel {
  flex: 1;
  background: #494949;
  padding: 5px 6px 1px 4px;
}

.layer-list {
  height: 100%;
  border: 1px solid #555;
}

.layer {
  display: grid;
  grid-template-columns: 18px 20px 3px 23px 15px 5px 96px 14px 12px;
  height: 17px;
  align-items: center;
  font-size: 9px;
  font-weight: 500;
  color: #ccc;
  position: relative;
}

.layer > * {
  grid-row: 1;
}

.eye { grid-column: 1; margin-left: 3px; }
.layer-color { grid-column: 3; width: 3px; height: 15px; }
.redbar { background: #c23b4b; }
.bluebar { background: #4465c4; }
.layer-arrow { grid-column: 4; margin-left: 7px; }
.layer-thumb { grid-column: 5; width: 15px; height: 15px; background: #fff; border: 1px solid #222; }
.layer-name { grid-column: 7; white-space: nowrap; }

.layer-dot {
  grid-column: 8;
  width: 7px;
  height: 7px;
  border: 1px solid #ccc;
  border-radius: 50%;
}

.layer-sel {
  grid-column: 9;
}

.layer-sel.on {
  width: 7px;
  height: 7px;
  background: #4465c4;
  border: 1px solid #cdd;
}

.layer-on {
  background: #4c627c;
  color: #e5e5e5;
}

.layer-corner {
  position: absolute;
  right: 0;
  top: 0;
  border: 3px solid transparent;
  border-top-color: #ddd;
  border-right-color: #ddd;
}

.layers-foot {
  height: 16px;
  flex: none;
  display: flex;
  align-items: center;
  gap: 11px;
  background: #494949;
  padding: 0 0 2px 4px;
  font-size: 9.500px;
  color: #bbb;
}

.layer-count {
  width: 74px;
}

.desktop-strip {
  height: 4px;
  flex: none;
  background: #101a20;
}

/* view menu */
.view-menu {
  position: absolute;
  left: 415px;
  top: 18px;
  width: 221px;
  height: 623px;
  padding-top: 2.600px;
  background: rgba(236, 238, 242, .8);
  backdrop-filter: blur(14px);
  border-radius: 0 0 5px 5px;
  box-shadow: 0 3px 9px rgba(0, 0, 0, .4);
  font-size: 12px;
  color: #2a2a2a;
}

.item {
  display: grid;
  grid-template-columns: 19px 1fr auto;
  height: 15.150px;
  line-height: 15.150px;
  padding-right: 10px;
  white-space: nowrap;
}

.item b {
  font: 700 13px/15px 'DejaVu Sans', sans-serif;
  text-align: right;
  padding-right: 4px;
}

.item kbd {
  font: 12px/15px 'DejaVu Sans', 'Liberation Sans', sans-serif;
  color: #333;
}

.item kbd u {
  display: inline-block;
  width: 10px;
  text-decoration: none;
  font-family: 'Inter', sans-serif;
  font-size: 12px;
  text-align: left;
}

.item kbd.sub {
  font-size: 10px;
  margin-right: 1px;
}

.disabled,
.disabled kbd {
  color: #9b9ea3;
}

.view-menu hr {
  border: 0;
  height: 1px;
  margin: 4.380px 0;
  background: rgba(120, 125, 135, .22);
}

.cursor {
  position: absolute;
  left: 436px;
  top: -1px;
}
```
